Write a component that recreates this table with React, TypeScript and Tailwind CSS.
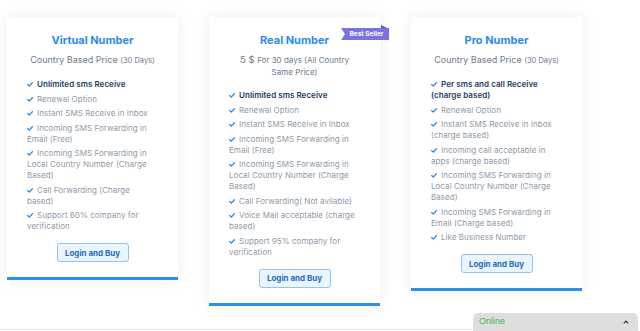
import React from "react";

type Item = { text: string; bold?: boolean };

const Check = () => (
  <svg width="6" height="5" viewBox="0 0 6 5" className="inline-block mr-[4px] align-[0px]">
    <path d="M0.6 2.6 L2.3 4.1 L5.4 0.8" fill="none" stroke="#2b8ae5" strokeWidth="1.3" strokeLinecap="round" strokeLinejoin="round" />
  </svg>
);

function Card({
  title,
  subtitle,
  items,
  badge,
}: {
  title: string;
  subtitle: React.ReactNode;
  items: Item[];
  badge?: boolean;
}) {
  return (
    <div className="relative w-[171px] bg-white shadow-[0_0_14px_rgba(0,0,0,0.07)] flex flex-col">
      {badge && (
        <div className="absolute top-[8px] right-[-9px] w-[48px] h-[15px]">
          <div className="absolute right-0 top-0 w-[8px] h-[4px] bg-[#5b53c0] [clip-path:polygon(0_100%,0_0,100%_100%)]" />
          <div className="absolute left-0 bottom-0 w-[48px] h-[12px] bg-[#7a72e2] [clip-path:polygon(0_0,100%_0,100%_100%,0_100%,4px_50%)] flex items-center justify-center pl-[3px] text-white font-bold text-[6.5px] leading-none">
            Best Seller
          </div>
        </div>
      )}
      <div className="px-5 pt-4 pb-[15px] flex flex-col">
        <div className="text-center text-[11px] leading-[14px] font-bold text-[#2d8ceb]">{title}</div>
        <div className="mt-[7px] text-center text-[#6e7c8b] text-[8px] leading-[12px]">{subtitle}</div>
        <div className="mt-[12px] flex flex-col gap-[3.5px]">
          {items.map((it, i) => (
            <div
              key={i}
              className={
                it.bold
                  ? "text-[8px] tracking-[0.05px] leading-[11px] font-semibold text-[#22405f]"
                  : "text-[8px] tracking-[0.05px] leading-[11px] text-[#8e9aa7]"
              }
            >
              <Check />
              {it.text}
            </div>
          ))}
        </div>
        <button className="mt-[11px] mx-auto w-[72px] h-[19px] rounded-[3px] border border-[#8ec5f3] bg-[#eaf5ff] text-[#1d6cc2] font-bold text-[8px] leading-none">
          Login and Buy
        </button>
      </div>
      <div className="h-[3px] bg-[#2e8fea]" />
    </div>
  );
}

const CountrySub = () => (
  <>
    <span className="text-[9px] leading-[12px]">Country Based Price </span>
    <span className="text-[7.5px] leading-[12px]">(30 Days)</span>
  </>
);

export default function App() {
  return (
    <div className="w-[640px] h-[331px] bg-white overflow-hidden" style={{ fontFamily: "Inter, 'Noto Sans', sans-serif" }}>
      <div className="h-[330px] border-b border-[#ececec] pt-[17px] pl-[7px] flex items-start gap-[31px]">
        <Card
          title="Virtual Number"
          subtitle={<CountrySub />}
          items={[
            { text: "Unlimited sms Receive", bold: true },
            { text: "Renewal Option" },
            { text: "Instant SMS Receive in Inbox" },
            { text: "Incoming SMS Forwarding in Email (Free)" },
            { text: "Incoming SMS Forwarding in Local Country Number (Charge Based)" },
            { text: "Call Forwarding (Charge based)" },
            { text: "Support 60% company for verification" },
          ]}
        />
        <Card
          badge
          title="Real Number"
          subtitle={
            <div className="px-[8px] text-[8px] leading-[12px]">
              <span className="text-[9.5px] leading-[12px]">5 $ </span>
              <span className="text-[8px] leading-[12px]">For 30 days (All Country Same Price)</span>
            </div>
          }
          items={[
            { text: "Unlimited sms Receive", bold: true },
            { text: "Renewal Option" },
            { text: "Instant SMS Receive in Inbox" },
            { text: "Incoming SMS Forwarding in Email (Free)" },
            { text: "Incoming SMS Forwarding in Local Country Number (Charge Based)" },
            { text: "Call Forwarding( Not avilable)" },
            { text: "Voice Mail acceptable (charge based)" },
            { text: "Support 95% company for verification" },
          ]}
        />
        <Card
          title="Pro Number"
          subtitle={<CountrySub />}
          items={[
            { text: "Per sms and call Receive (charge based)", bold: true },
            { text: "Renewal Option" },
            { text: "Instant SMS Receive in Inbox (charge based)" },
            { text: "Incoming call acceptable in apps (charge based)" },
            { text: "Incoming SMS Forwarding in Local Country Number (Charge Based)" },
            { text: "Incoming SMS Forwarding in Email (Charge based)" },
            { text: "Like Business Number" },
          ]}
        />
      </div>
      <div className="fixed bottom-0 left-[473px] w-[165px] h-[18px] bg-[#dedede] rounded-t-[5px] flex items-center justify-between pl-[6px] pr-[9px]">
        <span className="text-[9px] text-[#45b34b]" style={{ fontFamily: "'Liberation Sans', Arial, sans-serif" }}>Online</span>
        <svg width="6" height="4" viewBox="0 0 6 4"><path d="M0.8 3.3 L3 1 L5.2 3.3" fill="none" stroke="#333" strokeWidth="1.2" /></svg>
      </div>
    </div>
  );
}
